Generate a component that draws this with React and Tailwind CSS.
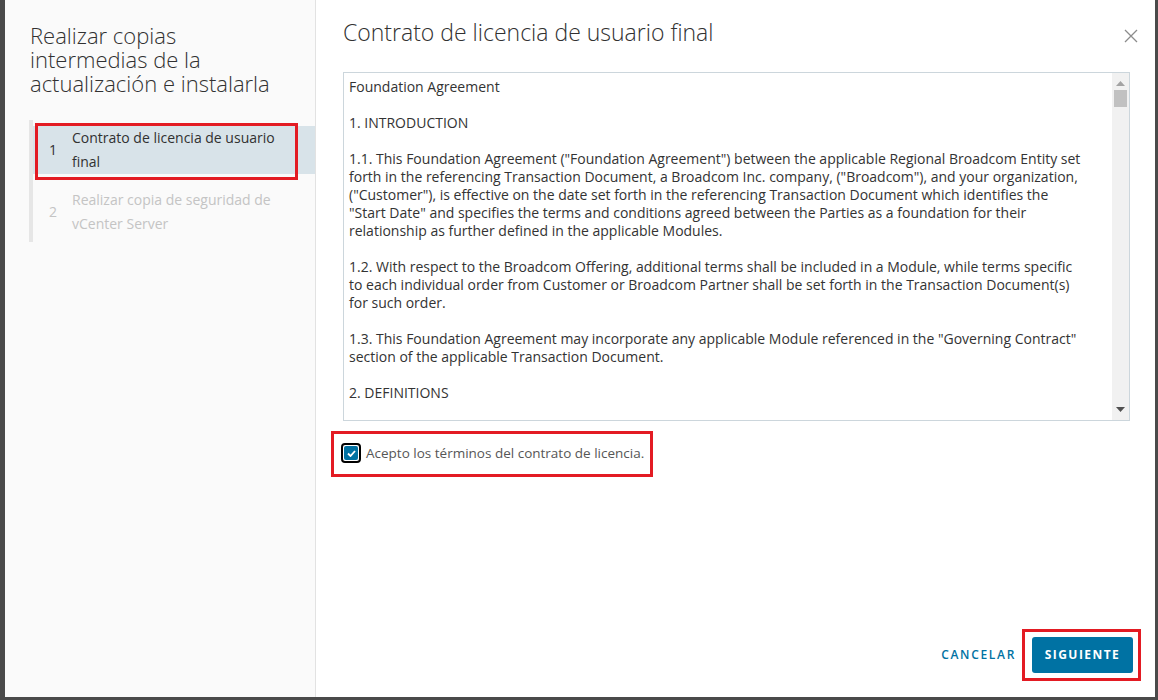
import React from "react";

const font = { fontFamily: "'Open Sans', 'Noto Sans', sans-serif" };

const paragraphs = [
  ["Foundation Agreement"],
  ["1. INTRODUCTION"],
  [
    '1.1. This Foundation Agreement ("Foundation Agreement") between the applicable Regional Broadcom Entity set',
    'forth in the referencing Transaction Document, a Broadcom Inc. company, ("Broadcom"), and your organization,',
    '("Customer"), is effective on the date set forth in the referencing Transaction Document which identifies the',
    '"Start Date" and specifies the terms and conditions agreed between the Parties as a foundation for their',
    "relationship as further defined in the applicable Modules.",
  ],
  [
    "1.2. With respect to the Broadcom Offering, additional terms shall be included in a Module, while terms specific",
    "to each individual order from Customer or Broadcom Partner shall be set forth in the Transaction Document(s)",
    "for such order.",
  ],
  [
    '1.3. This Foundation Agreement may incorporate any applicable Module referenced in the "Governing Contract"',
    "section of the applicable Transaction Document.",
  ],
  ["2. DEFINITIONS"],
];

const Scrollbar = () => (
  <div className="w-[17px] bg-[#f1f1f1] flex flex-col items-center shrink-0">
    <svg width="9" height="5" viewBox="0 0 9 5" className="mt-[8px]">
      <path d="M0 5 L4.5 0 L9 5 Z" fill="#a3a3a3" />
    </svg>
    <div className="mt-[4px] w-[13px] h-[17px] bg-[#c1c1c1]" />
    <div className="flex-1" />
    <svg width="9" height="5" viewBox="0 0 9 5" className="mb-[8px]">
      <path d="M0 0 L9 0 L4.5 5 Z" fill="#505050" />
    </svg>
  </div>
);

export default function App() {
  return (
    <div className="w-[1158px] h-[700px] bg-[#4a4a4a] overflow-hidden" style={font}>
      <div className="ml-[5px] mr-[3px] h-[697px] flex">
        {/* left wizard nav */}
        <div className="w-[311px] bg-[#fafafa] border-r border-[#e2e2e2] pt-[23px]">
          <h2 className="pl-[25px] text-[22px] leading-[24px] font-light text-[#313131]">
            <span className="block">Realizar copias</span>
            <span className="block">intermedias de la</span>
            <span className="block">actualización e instalarla</span>
          </h2>
          <div className="mt-[25px] ml-[24px] border-l-4 border-[#e6e6e6] pt-[6px] pb-[6px]">
            <div className="relative h-[48px] flex items-center bg-[#d8e3e9] text-[14px] leading-[24px] text-[#313131]">
              <span className="w-[39px] pl-[16px]">1</span>
              <span>
                Contrato de licencia de usuario
                <br />
                final
              </span>
              <div className="absolute left-[2px] top-[-3px] w-[263px] h-[57px] border-[3px] border-[#e31b23]" />
            </div>
            <div className="mt-[14px] h-[48px] flex items-center text-[14px] leading-[24px] text-[#c4c4c4]">
              <span className="w-[39px] pl-[16px]">2</span>
              <span>
                Realizar copia de seguridad de
                <br />
                vCenter Server
              </span>
            </div>
          </div>
        </div>

        {/* main content */}
        <div className="flex-1 bg-white flex flex-col pl-[27px] pr-[22px]">
          <div className="flex items-start justify-between pt-[17px]">
            <h1 className="text-[23px] leading-[30px] font-light text-[#313131]">
              Contrato de licencia de usuario final
            </h1>
            <svg width="14" height="14" viewBox="0 0 14 14" className="mt-[12px] mr-[-5px]">
              <path d="M1 1 L13 13 M13 1 L1 13" stroke="#8c8c8c" strokeWidth="1.3" />
            </svg>
          </div>

          <div className="mt-[25px] mr-[3px] h-[349px] border border-[#ccd6dc] flex">
            <div className="flex-1 overflow-hidden pl-[5px] pt-[5px] text-[14px] leading-[18px] text-[#333] whitespace-nowrap">
              {paragraphs.map((p, i) => (
                <p key={i} className="mb-[18px]">
                  {p.map((line, j) => (
                    <React.Fragment key={j}>
                      {line}
                      {j < p.length - 1 && <br />}
                    </React.Fragment>
                  ))}
                </p>
              ))}
            </div>
            <Scrollbar />
          </div>

          <div className="relative mt-[22px] ml-[-2px] flex items-center gap-[5px]">
            <div className="w-[20px] h-[20px] rounded-[4px] border-2 border-black flex items-center justify-center">
              <div className="w-[14px] h-[14px] rounded-[2px] bg-[#0072a3] flex items-center justify-center">
                <svg width="9" height="7" viewBox="0 0 9 7">
                  <path d="M1 3.5 L3.5 6 L8 1" fill="none" stroke="white" strokeWidth="1.8" />
                </svg>
              </div>
            </div>
            <span className="text-[13.5px] text-[#565656]">Acepto los términos del contrato de licencia.</span>
            <div className="absolute left-[-10px] top-[-12px] w-[322px] h-[46px] border-[3px] border-[#e31b23]" />
          </div>

          <div className="mt-auto pb-[24px] flex items-center justify-end gap-[16px]">
            <button className="text-[12px] font-semibold tracking-[0.14em] text-[#0072a3]">
              CANCELAR
            </button>
            <div className="relative">
              <button className="w-[101px] h-[36px] rounded-[3px] bg-[#0072a3] text-white text-[12px] font-bold tracking-[0.12em]">
                SIGUIENTE
              </button>
              <div className="absolute left-[-10px] top-[-8px] w-[119px] h-[52px] border-[3px] border-[#e31b23]" />
            </div>
          </div>
        </div>
      </div>
    </div>
  );
}
